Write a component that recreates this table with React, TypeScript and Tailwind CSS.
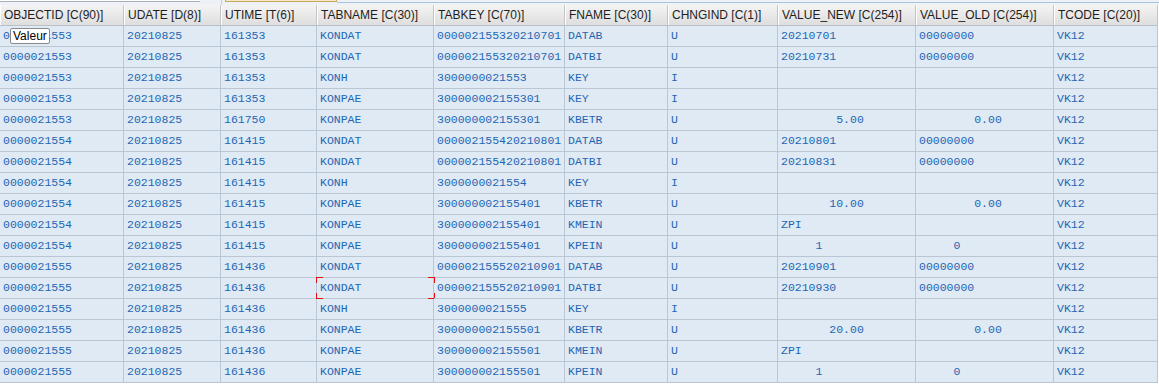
import React from 'react';

const columns = [
  'OBJECTID [C(90)]',
  'UDATE [D(8)]',
  'UTIME [T(6)]',
  'TABNAME [C(30)]',
  'TABKEY [C(70)]',
  'FNAME [C(30)]',
  'CHNGIND [C(1)]',
  'VALUE_NEW [C(254)]',
  'VALUE_OLD [C(254)]',
  'TCODE [C(20)]',
];

const rows: string[][] = [
  ['0000021553', '20210825', '161353', 'KONDAT', '000002155320210701', 'DATAB', 'U', '20210701', '00000000', 'VK12'],
  ['0000021553', '20210825', '161353', 'KONDAT', '000002155320210701', 'DATBI', 'U', '20210731', '00000000', 'VK12'],
  ['0000021553', '20210825', '161353', 'KONH', '3000000021553', 'KEY', 'I', '', '', 'VK12'],
  ['0000021553', '20210825', '161353', 'KONPAE', '300000002155301', 'KEY', 'I', '', '', 'VK12'],
  ['0000021553', '20210825', '161750', 'KONPAE', '300000002155301', 'KBETR', 'U', '        5.00', '        0.00', 'VK12'],
  ['0000021554', '20210825', '161415', 'KONDAT', '000002155420210801', 'DATAB', 'U', '20210801', '00000000', 'VK12'],
  ['0000021554', '20210825', '161415', 'KONDAT', '000002155420210801', 'DATBI', 'U', '20210831', '00000000', 'VK12'],
  ['0000021554', '20210825', '161415', 'KONH', '3000000021554', 'KEY', 'I', '', '', 'VK12'],
  ['0000021554', '20210825', '161415', 'KONPAE', '300000002155401', 'KBETR', 'U', '       10.00', '        0.00', 'VK12'],
  ['0000021554', '20210825', '161415', 'KONPAE', '300000002155401', 'KMEIN', 'U', 'ZPI', '', 'VK12'],
  ['0000021554', '20210825', '161415', 'KONPAE', '300000002155401', 'KPEIN', 'U', '     1', '     0', 'VK12'],
  ['0000021555', '20210825', '161436', 'KONDAT', '000002155520210901', 'DATAB', 'U', '20210901', '00000000', 'VK12'],
  ['0000021555', '20210825', '161436', 'KONDAT', '000002155520210901', 'DATBI', 'U', '20210930', '00000000', 'VK12'],
  ['0000021555', '20210825', '161436', 'KONH', '3000000021555', 'KEY', 'I', '', '', 'VK12'],
  ['0000021555', '20210825', '161436', 'KONPAE', '300000002155501', 'KBETR', 'U', '       20.00', '        0.00', 'VK12'],
  ['0000021555', '20210825', '161436', 'KONPAE', '300000002155501', 'KMEIN', 'U', 'ZPI', '', 'VK12'],
  ['0000021555', '20210825', '161436', 'KONPAE', '300000002155501', 'KPEIN', 'U', '     1', '     0', 'VK12'],
];

const gridCols =
  'grid grid-cols-[124px_97px_96px_117px_131px_103px_110px_138px_138px_104px]';

// red focus brackets around the selected cell
const FocusMarks: React.FC = () => (
  <>
    <span className="absolute -left-px -top-px w-[7px] h-[6px] border-l border-t border-[#e01010]" />
    <span className="absolute -right-[2px] -top-px w-[7px] h-[6px] border-r border-t border-[#e01010]" />
    <span className="absolute -left-px -bottom-px w-[7px] h-[6px] border-l border-b border-[#e01010]" />
    <span className="absolute -right-[2px] -bottom-px w-[7px] h-[6px] border-r border-b border-[#e01010]" />
  </>
);

const App: React.FC = () => {
  return (
    <div className="w-[1159px] h-[384px] overflow-hidden bg-white relative">
      {/* toolbar remnant above the grid */}
      <div className="h-[5px] relative bg-[#eef1f5] flex">
        <div className="w-[200px] h-[2px] bg-white border-b border-[#a9b0b8]" />
        <div className="w-[22px] h-[5px] border-r border-[#c9d0d8]" />
        <div className="ml-[3px] w-[112px] h-[2px] bg-[#f5e9c9] border-b border-x border-[#c8a85e]" />
        <div className="flex-1 h-[3px] border-b border-[#a9c3e0]" />
      </div>

      <div className="w-[1158px] border-r border-[#b9c5d3]">
        {/* header */}
        <div
          className={`${gridCols} h-[21px] bg-gradient-to-b from-[#f4f4f4] to-[#dedede] border-b border-[#b9c0c8]`}
        >
          {columns.map((c) => (
            <div
              key={c}
              className="flex items-center pl-[4px] border-r border-[#c4c4c4] shadow-[inset_1px_0_0_#ffffff] text-[12px] text-[#1e1e1e] whitespace-nowrap overflow-hidden font-['Liberation_Sans',Arial,sans-serif]"
            >
              {c}
            </div>
          ))}
        </div>

        {/* data rows */}
        {rows.map((r, ri) => (
          <div key={ri} className={`${gridCols} h-[21px] bg-[#dfeaf5]`}>
            {r.map((v, ci) => (
              <div
                key={ci}
                className="relative flex items-center pl-[3px] border-r border-b border-[#bac6d4] text-[11.5px] text-[#1f66b2] whitespace-pre overflow-visible font-['Liberation_Mono','Courier_New',monospace]"
              >
                {v}
                {ri === 12 && ci === 3 && <FocusMarks />}
              </div>
            ))}
          </div>
        ))}
      </div>

      {/* hover tooltip */}
      <div className="absolute left-[10px] top-[28px] h-[16px] px-[2px] flex items-center bg-white border border-[#8a8a8a] rounded-[2px] text-[12px] text-black font-['Liberation_Sans',Arial,sans-serif]">
        Valeur
      </div>
    </div>
  );
};

export default App;
